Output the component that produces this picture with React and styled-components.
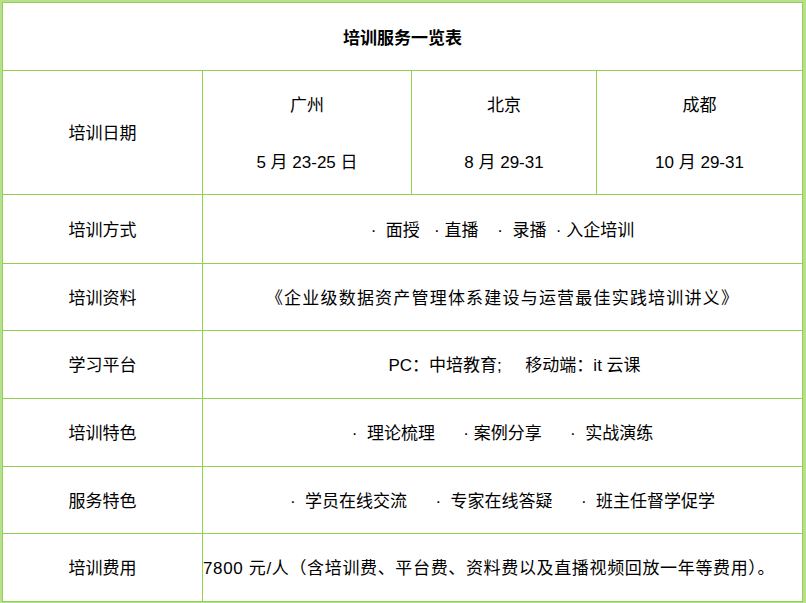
import React from "react"
import styled, { createGlobalStyle } from "styled-components"

const GlobalStyle = createGlobalStyle`
  html, body {
    margin: 0;
    padding: 0;
    background: #ffffff;
  }
  body {
    font-family: "Liberation Sans", "Noto Sans CJK SC", sans-serif;
    color: #000000;
  }
`

const Frame = styled.div`
  width: 806px;
  box-sizing: border-box;
  border: 2px solid #b6e08c;
  border-right-width: 3px;
`

const Table = styled.table`
  width: 100%;
  border-collapse: collapse;
  table-layout: fixed;
  font-size: 17px;
`

const Cell = styled.td`
  border: 1px solid #92d050;
  height: ${p => p.h || 67}px;
  padding: 0 0 2px ${p => p.indent || 0}px;
  text-align: ${p => p.align || "center"};
  vertical-align: middle;
  white-space: pre;
  letter-spacing: ${p => p.spacing || 0}px;
  box-sizing: border-box;
`

const TitleCell = styled(Cell)`
  font-weight: 700;
  padding-bottom: 1px;
`

const DateStack = styled.div`
  display: flex;
  flex-direction: column;
  align-items: center;
  gap: 33px;
  line-height: 24px;
  padding-top: 6px;
`

const cities = [
  { name: "广州", date: "5 月 23-25 日" },
  { name: "北京", date: "8 月 29-31" },
  { name: "成都", date: "10 月 29-31" },
]

const rows = [
  { label: "培训方式", text: "·  面授   · 直播    ·  录播  · 入企培训", h: 69 },
  { label: "培训资料", text: "《企业级数据资产管理体系建设与运营最佳实践培训讲义》", h: 67, spacing: 1.2 },
  { label: "学习平台", text: "PC：中培教育;     移动端：it 云课", h: 68, indent: 24 },
  { label: "培训特色", text: "·  理论梳理      · 案例分享      ·  实战演练", h: 68 },
  { label: "服务特色", text: "·  学员在线交流      ·  专家在线答疑      ·  班主任督学促学", h: 67 },
  { label: "培训费用", text: "7800 元/人（含培训费、平台费、资料费以及直播视频回放一年等费用）。", h: 68, align: "left", spacing: 0.65 },
]

export default function App() {
  return (
    <>
      <GlobalStyle />
      <Frame>
        <Table>
          <colgroup>
            <col style={{ width: 200 }} />
            <col style={{ width: 209 }} />
            <col style={{ width: 185 }} />
            <col />
          </colgroup>
          <tbody>
            <tr>
              <TitleCell colSpan={4} h={68}>培训服务一览表</TitleCell>
            </tr>
            <tr>
              <Cell h={124}>培训日期</Cell>
              {cities.map(c => (
                <Cell key={c.name} h={124}>
                  <DateStack>
                    <span>{c.name}</span>
                    <span>{c.date}</span>
                  </DateStack>
                </Cell>
              ))}
            </tr>
            {rows.map(r => (
              <tr key={r.label}>
                <Cell h={r.h}>{r.label}</Cell>
                <Cell colSpan={3} h={r.h} align={r.align} spacing={r.spacing} indent={r.indent}>
                  {r.text}
                </Cell>
              </tr>
            ))}
          </tbody>
        </Table>
      </Frame>
    </>
  )
}
